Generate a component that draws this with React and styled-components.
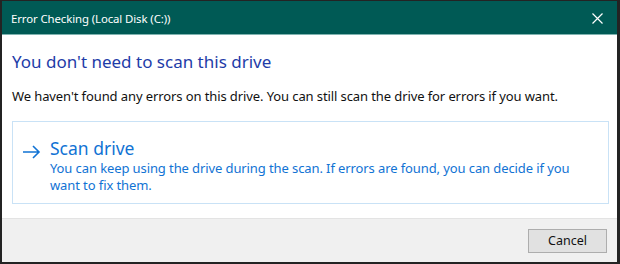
import styled, { createGlobalStyle } from "styled-components";

const Global = createGlobalStyle`
  html, body { margin: 0; padding: 0; background: #1f1f1f; }
  body { font-family: "Noto Sans", "Open Sans", sans-serif; }
`;

const Window = styled.div`
  box-sizing: border-box;
  width: 620px;
  height: 264px;
  display: flex;
  flex-direction: column;
  background: #ffffff;
  border-style: solid;
  border-color: #232323;
  border-width: 1px 3px 2px 2px;
`;

const TitleBar = styled.div`
  height: 34px;
  display: flex;
  align-items: center;
  justify-content: space-between;
  padding: 1px 10px 0 9px;
  box-sizing: border-box;
  background: #005a55;
  border-bottom: 1px solid #7fb3b0;
  color: #ffffff;
  font-size: 11.4px;
  letter-spacing: -0.1px;
`;

const CloseButton = styled.div`
  width: 20px;
  height: 20px;
  display: flex;
  align-items: center;
  justify-content: center;
`;

const Content = styled.div`
  flex: 1;
  display: flex;
  flex-direction: column;
  padding: 16px 8px 0 10px;
`;

const Heading = styled.div`
  color: #1e3ca8;
  font-size: 17px;
  line-height: 22px;
`;

const Body = styled.div`
  margin-top: 15px;
  color: #111111;
  font-size: 13px;
  line-height: 17px;
  letter-spacing: -0.1px;
`;

const CommandLink = styled.div`
  margin-top: 16px;
  height: 83px;
  box-sizing: border-box;
  border: 1px solid #c9e2f6;
  display: flex;
  gap: 8px;
  padding: 14px 0 0 9px;
`;

const Arrow = styled.div`
  width: 20px;
  padding-top: 6px;
`;

const LinkText = styled.div`
  display: flex;
  flex-direction: column;
  color: #1173d4;
`;

const LinkTitle = styled.div`
  font-size: 17.5px;
  line-height: 24px;
`;

const LinkNote = styled.div`
  font-size: 13px;
  line-height: 17px;
  letter-spacing: -0.1px;
  width: 530px;
`;

const Footer = styled.div`
  height: 44px;
  box-sizing: border-box;
  background: #f0f0f0;
  border-top: 1px solid #e3e3e3;
  display: flex;
  align-items: center;
  justify-content: flex-end;
  padding-right: 10px;
`;

const Button = styled.div`
  width: 79px;
  height: 24px;
  box-sizing: border-box;
  border: 1px solid #adadad;
  background: #e1e1e1;
  display: flex;
  align-items: center;
  justify-content: center;
  font-size: 12.5px;
  color: #111111;
`;

export default function App() {
  return (
    <>
      <Global />
      <Window>
        <TitleBar>
          <span>Error Checking (Local Disk (C:))</span>
          <CloseButton>
            <svg width="11" height="11" viewBox="0 0 11 11">
              <path d="M0.5 0.5 L10.5 10.5 M10.5 0.5 L0.5 10.5" stroke="#ffffff" strokeWidth="1.2" />
            </svg>
          </CloseButton>
        </TitleBar>
        <Content>
          <Heading>You don't need to scan this drive</Heading>
          <Body>
            We haven't found any errors on this drive. You can still scan the drive for errors if you want.
          </Body>
          <CommandLink>
            <Arrow>
              <svg width="19" height="14" viewBox="0 0 19 14">
                <path d="M1 7 H17 M11 1 L17 7 L11 13" stroke="#1173d4" strokeWidth="1.6" fill="none" />
              </svg>
            </Arrow>
            <LinkText>
              <LinkTitle>Scan drive</LinkTitle>
              <LinkNote>
                You can keep using the drive during the scan. If errors are found, you can decide if you want to fix them.
              </LinkNote>
            </LinkText>
          </CommandLink>
        </Content>
        <Footer>
          <Button>Cancel</Button>
        </Footer>
      </Window>
    </>
  );
}
